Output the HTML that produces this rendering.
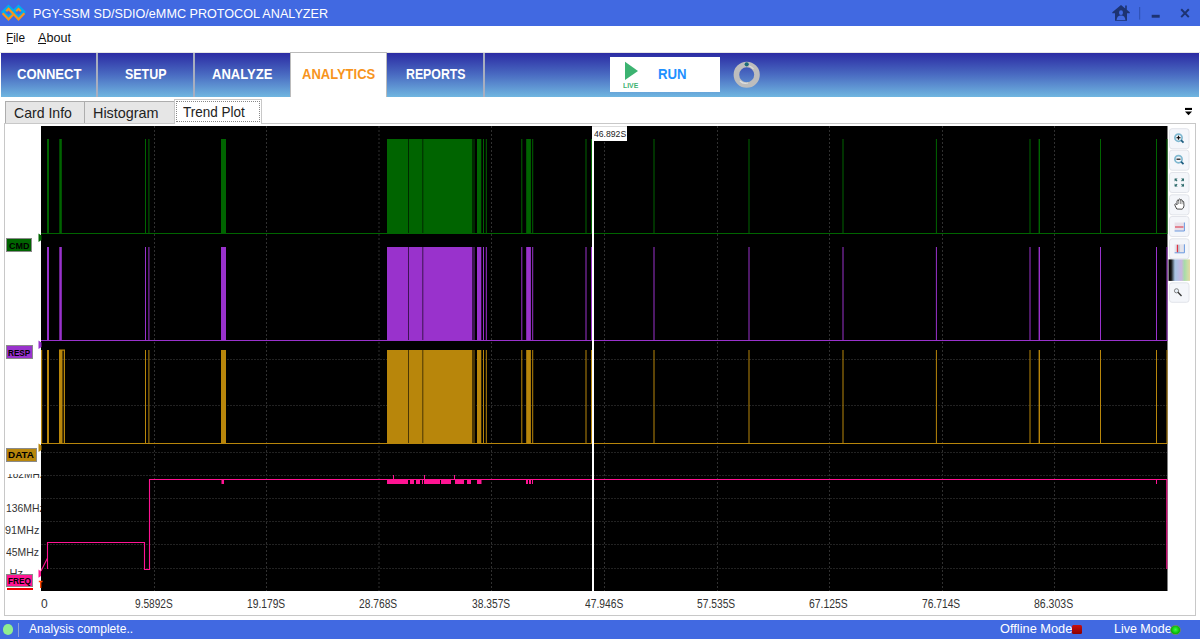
<!DOCTYPE html>
<html><head><meta charset="utf-8"><style>
*{margin:0;padding:0;box-sizing:border-box}
body{width:1200px;height:639px;overflow:hidden;background:#fff;font-family:"Liberation Sans", sans-serif;position:relative}
.a{position:absolute}
.t{position:absolute;white-space:pre;transform-origin:0 0;font-family:"Liberation Sans", sans-serif}
</style></head><body>
<div class="a" style="left:0;top:0;width:1200px;height:26px;background:#4169E1"></div>
<div class="a" style="left:0;top:52px;width:1200px;height:1px;background:#e6e6e6"></div>
<div class="a" style="left:1px;top:53px;width:1198px;height:44px;background:linear-gradient(#2B2BA3,#4a6cc2 50%,#70b6e0)"></div>
<div class="a" style="left:96px;top:53px;width:1.5px;height:44px;background:#a8aec0"></div>
<div class="a" style="left:193px;top:53px;width:1.5px;height:44px;background:#a8aec0"></div>
<div class="a" style="left:483px;top:53px;width:1.5px;height:44px;background:#a8aec0"></div>
<div class="a" style="left:290px;top:52px;width:97px;height:45px;background:#fff;border:1px solid #bbb;border-bottom:none"></div>
<div class="a" style="left:610px;top:57px;width:110px;height:35px;background:#fff"></div>
<div class="a" style="left:5px;top:101px;width:80px;height:23px;background:#e6e6e6;border:1px solid #adadad;border-bottom:none"></div>
<div class="a" style="left:84px;top:101px;width:91px;height:23px;background:#e6e6e6;border:1px solid #adadad;border-bottom:none"></div>
<div class="a" style="left:4px;top:123px;width:1192px;height:493px;border:1px solid #c8c8c8;background:#fff"></div>
<div class="a" style="left:174px;top:99px;width:88px;height:25px;background:#fff;border:1px solid #c8c8c8;border-bottom:none"></div>
<div class="a" style="left:176px;top:101px;width:84px;height:21px;border:1px dotted #888"></div>
<div class="a" style="left:0;top:0;width:41px;height:639px;overflow:hidden"><div class="t " style="left:5.76px;top:503.00px;font-size:11.0px;line-height:11.0px;font-weight:normal;color:#333;transform:scaleX(0.9436);">136MHz</div><div class="t " style="left:5.32px;top:524.50px;font-size:11.0px;line-height:11.0px;font-weight:normal;color:#333;transform:scaleX(0.9848);">91MHz</div><div class="t " style="left:6.30px;top:546.70px;font-size:11.5px;line-height:11.5px;font-weight:normal;color:#333;transform:scaleX(0.9028);">45MHz</div><div class="t " style="left:5.90px;top:568.00px;font-size:11.0px;line-height:11.0px;font-weight:normal;color:#333;transform:scaleX(1.0000);">-Hz</div><div class="a" style="left:0;top:473.5px;width:41px;height:6px;overflow:hidden"><div class="a" style="left:0;top:-473.5px;width:41px;height:639px"><div class="t " style="left:6.87px;top:469.00px;font-size:11.0px;line-height:11.0px;font-weight:normal;color:#333;transform:scaleX(0.9282);">182MHz</div></div></div></div>
<svg width="1200" height="639" style="position:absolute;left:0;top:0">
<rect x="41" y="126" width="1126.5" height="465" fill="#000"/>
<line x1="154.5" y1="126" x2="154.5" y2="591" stroke="#303030" stroke-width="1" stroke-dasharray="2,2"/>
<line x1="266.5" y1="126" x2="266.5" y2="591" stroke="#303030" stroke-width="1" stroke-dasharray="2,2"/>
<line x1="379.0" y1="126" x2="379.0" y2="591" stroke="#303030" stroke-width="1" stroke-dasharray="2,2"/>
<line x1="491.5" y1="126" x2="491.5" y2="591" stroke="#303030" stroke-width="1" stroke-dasharray="2,2"/>
<line x1="604.5" y1="126" x2="604.5" y2="591" stroke="#303030" stroke-width="1" stroke-dasharray="2,2"/>
<line x1="717.5" y1="126" x2="717.5" y2="591" stroke="#303030" stroke-width="1" stroke-dasharray="2,2"/>
<line x1="829.5" y1="126" x2="829.5" y2="591" stroke="#303030" stroke-width="1" stroke-dasharray="2,2"/>
<line x1="942.5" y1="126" x2="942.5" y2="591" stroke="#303030" stroke-width="1" stroke-dasharray="2,2"/>
<line x1="1054.5" y1="126" x2="1054.5" y2="591" stroke="#303030" stroke-width="1" stroke-dasharray="2,2"/>
<line x1="41" y1="359.5" x2="1167" y2="359.5" stroke="#222" stroke-width="1" stroke-dasharray="2,1"/>
<line x1="41" y1="405.5" x2="1167" y2="405.5" stroke="#222" stroke-width="1" stroke-dasharray="2,1"/>
<line x1="41" y1="452.5" x2="1167" y2="452.5" stroke="#222" stroke-width="1" stroke-dasharray="2,1"/>
<line x1="41" y1="475.5" x2="1167" y2="475.5" stroke="#222" stroke-width="1" stroke-dasharray="2,1"/>
<line x1="41" y1="498.5" x2="1167" y2="498.5" stroke="#222" stroke-width="1" stroke-dasharray="2,1"/>
<line x1="41" y1="521.5" x2="1167" y2="521.5" stroke="#222" stroke-width="1" stroke-dasharray="2,1"/>
<line x1="41" y1="544.5" x2="1167" y2="544.5" stroke="#222" stroke-width="1" stroke-dasharray="2,1"/>
<line x1="41" y1="568.5" x2="1167" y2="568.5" stroke="#222" stroke-width="1" stroke-dasharray="2,1"/>
<rect x="47" y="139" width="2.00" height="95" fill="#006400"/>
<rect x="59.3" y="139" width="2.50" height="95" fill="#006400"/>
<rect x="145" y="139" width="1.00" height="95" fill="#006400"/>
<rect x="148.4" y="139" width="1.00" height="95" fill="#006400"/>
<rect x="221" y="139" width="5.00" height="95" fill="#006400"/>
<rect x="387" y="139" width="85.50" height="95" fill="#006400"/>
<rect x="477" y="139" width="4.30" height="95" fill="#006400"/>
<rect x="483" y="139" width="1.00" height="95" fill="#006400"/>
<rect x="485.8" y="139" width="1.00" height="95" fill="#006400"/>
<rect x="521.3" y="139" width="1.00" height="95" fill="#006400"/>
<rect x="526.2" y="139" width="4.70" height="95" fill="#006400"/>
<rect x="532.2" y="139" width="1.00" height="95" fill="#006400"/>
<rect x="585.5" y="139" width="1.00" height="95" fill="#006400"/>
<rect x="591" y="139" width="1.00" height="95" fill="#006400"/>
<rect x="653.5" y="139" width="1.00" height="95" fill="#006400"/>
<rect x="748.5" y="139" width="1.00" height="95" fill="#006400"/>
<rect x="842.5" y="139" width="1.00" height="95" fill="#006400"/>
<rect x="935.9" y="139" width="1.00" height="95" fill="#006400"/>
<rect x="1029.5" y="139" width="1.00" height="95" fill="#006400"/>
<rect x="1038.6" y="139" width="1.40" height="95" fill="#006400"/>
<rect x="1100" y="139" width="1.00" height="95" fill="#006400"/>
<rect x="1156" y="139" width="1.00" height="95" fill="#006400"/>
<rect x="408" y="139" width="1.00" height="94" fill="#002800"/>
<rect x="422.3" y="139" width="1.00" height="94" fill="#002800"/>
<rect x="472" y="139" width="3" height="94" fill="#002800"/>
<rect x="41" y="233" width="1126.5" height="1" fill="#006400"/>
<rect x="47" y="247" width="2.00" height="94" fill="#9932CC"/>
<rect x="59.3" y="247" width="2.50" height="94" fill="#9932CC"/>
<rect x="145" y="247" width="1.00" height="94" fill="#9932CC"/>
<rect x="148.4" y="247" width="1.00" height="94" fill="#9932CC"/>
<rect x="221" y="247" width="5.00" height="94" fill="#9932CC"/>
<rect x="387" y="247" width="85.50" height="94" fill="#9932CC"/>
<rect x="477" y="247" width="4.30" height="94" fill="#9932CC"/>
<rect x="483" y="247" width="1.00" height="94" fill="#9932CC"/>
<rect x="485.8" y="247" width="1.00" height="94" fill="#9932CC"/>
<rect x="521.3" y="247" width="1.00" height="94" fill="#9932CC"/>
<rect x="526.2" y="247" width="4.70" height="94" fill="#9932CC"/>
<rect x="532.2" y="247" width="1.00" height="94" fill="#9932CC"/>
<rect x="585.5" y="247" width="1.00" height="94" fill="#9932CC"/>
<rect x="591" y="247" width="1.00" height="94" fill="#9932CC"/>
<rect x="653.5" y="247" width="1.00" height="94" fill="#9932CC"/>
<rect x="748.5" y="247" width="1.00" height="94" fill="#9932CC"/>
<rect x="842.5" y="247" width="1.00" height="94" fill="#9932CC"/>
<rect x="935.9" y="247" width="1.00" height="94" fill="#9932CC"/>
<rect x="1029.5" y="247" width="1.00" height="94" fill="#9932CC"/>
<rect x="1038.6" y="247" width="1.40" height="94" fill="#9932CC"/>
<rect x="1100" y="247" width="1.00" height="94" fill="#9932CC"/>
<rect x="1156" y="247" width="1.00" height="94" fill="#9932CC"/>
<rect x="408" y="247" width="1.00" height="93" fill="#3d1452"/>
<rect x="422.3" y="247" width="1.00" height="93" fill="#3d1452"/>
<rect x="472" y="247" width="3" height="93" fill="#3d1452"/>
<rect x="41" y="340" width="1126.5" height="1" fill="#9932CC"/>
<rect x="47" y="350" width="2.00" height="94" fill="#B8860B"/>
<rect x="59" y="350" width="3.50" height="94" fill="#B8860B"/>
<rect x="145" y="350" width="1.00" height="94" fill="#B8860B"/>
<rect x="148.4" y="350" width="1.00" height="94" fill="#B8860B"/>
<rect x="221" y="350" width="5.00" height="94" fill="#B8860B"/>
<rect x="387" y="350" width="85.50" height="94" fill="#B8860B"/>
<rect x="477" y="350" width="4.30" height="94" fill="#B8860B"/>
<rect x="483" y="350" width="1.00" height="94" fill="#B8860B"/>
<rect x="485.8" y="350" width="1.00" height="94" fill="#B8860B"/>
<rect x="521.3" y="350" width="1.00" height="94" fill="#B8860B"/>
<rect x="526.2" y="350" width="4.70" height="94" fill="#B8860B"/>
<rect x="532.2" y="350" width="1.00" height="94" fill="#B8860B"/>
<rect x="585.5" y="350" width="1.00" height="94" fill="#B8860B"/>
<rect x="591" y="350" width="1.00" height="94" fill="#B8860B"/>
<rect x="653.5" y="350" width="1.00" height="94" fill="#B8860B"/>
<rect x="748.5" y="350" width="1.00" height="94" fill="#B8860B"/>
<rect x="842.5" y="350" width="1.00" height="94" fill="#B8860B"/>
<rect x="935.9" y="350" width="1.00" height="94" fill="#B8860B"/>
<rect x="1029.5" y="350" width="1.00" height="94" fill="#B8860B"/>
<rect x="1038.6" y="350" width="1.40" height="94" fill="#B8860B"/>
<rect x="1100" y="350" width="1.00" height="94" fill="#B8860B"/>
<rect x="1156" y="350" width="1.00" height="94" fill="#B8860B"/>
<rect x="63.75" y="350" width="1.25" height="94" fill="#B8860B"/>
<rect x="408" y="350" width="1.00" height="93" fill="#4a3604"/>
<rect x="422.3" y="350" width="1.00" height="93" fill="#4a3604"/>
<rect x="472" y="350" width="3" height="93" fill="#4a3604"/>
<rect x="41" y="443" width="1126.5" height="1" fill="#B8860B"/><rect x="59" y="349.5" width="6" height="1.2" fill="#B8860B"/>
<polyline points="41,571 47.5,558 47.5,569 47.5,542.5 144.5,542.5 144.5,569.5 149.5,569.5 149.5,479.5 1166.8,479.5 1166.8,569" fill="none" stroke="#FF1493" stroke-width="1.1"/><rect x="221.5" y="479" width="2.5" height="5" fill="#FF1493"/><rect x="387" y="479" width="21" height="5" fill="#FF1493"/><rect x="410" y="479" width="4" height="5" fill="#FF1493"/><rect x="416" y="479" width="4" height="5" fill="#FF1493"/><rect x="422" y="479" width="1" height="5" fill="#FF1493"/><rect x="424" y="479" width="16" height="5" fill="#FF1493"/><rect x="441" y="479" width="10" height="5" fill="#FF1493"/><rect x="455" y="479" width="9" height="5" fill="#FF1493"/><rect x="467" y="479" width="4" height="5" fill="#FF1493"/><rect x="477" y="479" width="4.5" height="5" fill="#FF1493"/><rect x="526" y="479" width="2" height="5" fill="#FF1493"/><rect x="529" y="479" width="2" height="5" fill="#FF1493"/><rect x="532" y="479" width="1" height="5" fill="#FF1493"/><rect x="393" y="475" width="1" height="5" fill="#FF1493"/><rect x="424" y="475" width="1" height="5" fill="#FF1493"/><rect x="454" y="475" width="1" height="5" fill="#FF1493"/><rect x="1156" y="479" width="1" height="5" fill="#FF1493"/>
<rect x="1166.5" y="139" width="1" height="94" fill="#006400"/><rect x="1166.5" y="247" width="1" height="93" fill="#9932CC"/><rect x="1166.5" y="350" width="1" height="93" fill="#B8860B"/><rect x="41" y="350" width="1.2" height="93" fill="#B8860B"/>
<rect x="592" y="126" width="2" height="465" fill="#fff"/>
<polygon points="38.5,233.5 41.5,235.5 41.5,240 38.5,242" fill="#006400"/><polygon points="38.5,340.5 41.5,342.5 41.5,347 38.5,349" fill="#9932CC"/><polygon points="38.5,443.5 41.5,445.5 41.5,450 38.5,452" fill="#B8860B"/><polygon points="38.5,569.5 41,571.5 41,576 38.5,577.7" fill="#FF1493"/><path d="M38.8,581.5 H42.6 M40.7,581.5 V588" stroke="#FF4500" stroke-width="1.4"/>
</svg>
<div class="a" style="left:6px;top:237.5px;width:26px;height:14.5px;background:#006400;border:1.4px solid #8a8a8a"></div><div class="a" style="left:6px;top:345px;width:27px;height:14px;background:#9932CC;border:1.4px solid #8a8a8a"></div><div class="a" style="left:6px;top:447.5px;width:30.700000000000003px;height:14.5px;background:#B8860B;border:1.4px solid #8a8a8a"></div><div class="a" style="left:6px;top:573.8px;width:26.5px;height:13.700000000000045px;background:#FF1493;border:1.4px solid #8a8a8a"></div><div class="a" style="left:7px;top:588px;width:26px;height:1.5px;background:#e00"></div>
<svg class="a" style="left:0;top:0" width="30" height="26"><polygon points="8.5,6.6 13.9,12.0 8.5,17.4 3.0999999999999996,12.0" fill="none" stroke="#00AEEF" stroke-width="3"/><polygon points="18.5,6.6 23.9,12.0 18.5,17.4 13.1,12.0" fill="none" stroke="#00AEEF" stroke-width="3"/><polyline points="2.6,13.2 8.5,19.3 13.5,14.3" fill="none" stroke="#F7941D" stroke-width="2.3"/><polyline points="6.2,11.2 8.5,8.9 13.5,14.0 18.5,19.3 24.4,13.2" fill="none" stroke="#F7941D" stroke-width="2.3"/><polyline points="16.2,11.2 18.5,8.9 20.8,11.2" fill="none" stroke="#F7941D" stroke-width="2"/></svg><svg class="a" style="left:1100px;top:0" width="100" height="26"><polygon points="12.3,12.2 21,5 25.2,8.4 25.2,5.6 26.8,5.6 26.8,9.7 29.8,12.2 29.8,13.2 27,13.2 27,20.8 15,20.8 15,13.2 12.3,13.2" fill="#1d3372"/><ellipse cx="21" cy="12.7" rx="2" ry="2.4" fill="#4169E1"/><path d="M16.6,20 Q17,15.6 21,15.6 Q25,15.6 25.4,20 Z" fill="#4169E1"/><rect x="39.2" y="7" width="1" height="12.6" fill="#2d4fb0"/><rect x="51.7" y="14.8" width="8" height="2.9" fill="#1d3372"/><path d="M81.2,9.2 L88.8,17.1 M88.8,9.2 L81.2,17.1" stroke="#1d3372" stroke-width="2"/></svg><svg class="a" style="left:600px;top:50px" width="180" height="50"><polygon points="25,11.7 38,21 25,30" fill="#3CB371"/><circle cx="146.7" cy="24.75" r="10.3" fill="none" stroke="#bdbdbd" stroke-width="5.6"/><path d="M 140 31 A 8 8 0 0 0 148 33" fill="none" stroke="#e0e0e0" stroke-width="1.2"/><path d="M 149 16 A 8 8 0 0 1 153.5 19" fill="none" stroke="#dedede" stroke-width="1.2"/><circle cx="146.7" cy="14.3" r="2.1" fill="#1b6b78"/></svg><svg class="a" style="left:1180px;top:100px" width="20" height="20"><rect x="5" y="7.9" width="7" height="2.1" fill="#000"/><polygon points="5,11.4 12,11.4 8.5,15.3" fill="#000"/></svg><svg class="a" style="left:1160px;top:120px" width="40" height="190"><rect x="9.5" y="8.7" width="19.5" height="20" rx="2.5" fill="#f4f6fa" stroke="#e2e4ea" stroke-width="1"/><rect x="9.5" y="30.2" width="19.5" height="20" rx="2.5" fill="#f4f6fa" stroke="#e2e4ea" stroke-width="1"/><rect x="9.5" y="52.5" width="19.5" height="20" rx="2.5" fill="#f4f6fa" stroke="#e2e4ea" stroke-width="1"/><rect x="9.5" y="74.8" width="19.5" height="20" rx="2.5" fill="#f4f6fa" stroke="#e2e4ea" stroke-width="1"/><rect x="9.5" y="96.5" width="19.5" height="20" rx="2.5" fill="#f4f6fa" stroke="#e2e4ea" stroke-width="1"/><rect x="9.5" y="118.8" width="19.5" height="20" rx="2.5" fill="#f4f6fa" stroke="#e2e4ea" stroke-width="1"/><circle cx="18.5" cy="17.7" r="3.6" fill="none" stroke="#7fb8d0" stroke-width="1.7"/><line x1="21" y1="20.2" x2="23.5" y2="22.7" stroke="#1f5e80" stroke-width="1.8"/><line x1="16.5" y1="17.7" x2="20.5" y2="17.7" stroke="#111" stroke-width="1.2"/><line x1="18.5" y1="15.7" x2="18.5" y2="19.7" stroke="#111" stroke-width="1.2"/><circle cx="18.5" cy="39.2" r="3.6" fill="none" stroke="#7fb8d0" stroke-width="1.7"/><line x1="21" y1="41.7" x2="23.5" y2="44.2" stroke="#1f5e80" stroke-width="1.8"/><line x1="16.5" y1="39.2" x2="20.5" y2="39.2" stroke="#111" stroke-width="1.2"/><polygon points="14.6,58.6 17.6,58.6 14.6,61.6" fill="#2e6b6b"/><line x1="15.1" y1="59.1" x2="17.1" y2="61.1" stroke="#2e6b6b" stroke-width="1.2"/><polygon points="24.0,58.6 21.0,58.6 24.0,61.6" fill="#2e6b6b"/><line x1="23.5" y1="59.1" x2="21.5" y2="61.1" stroke="#2e6b6b" stroke-width="1.2"/><polygon points="14.6,66.6 17.6,66.6 14.6,63.6" fill="#2e6b6b"/><line x1="15.1" y1="66.1" x2="17.1" y2="64.1" stroke="#2e6b6b" stroke-width="1.2"/><polygon points="24.0,66.6 21.0,66.6 24.0,63.6" fill="#2e6b6b"/><line x1="23.5" y1="66.1" x2="21.5" y2="64.1" stroke="#2e6b6b" stroke-width="1.2"/><path d="M16.8,89 L15.2,86 Q14.3,84.3 15.4,83.8 Q16.2,83.6 17,84.8 L17,80.8 Q17.8,79.4 18.7,80.6 L18.7,79.6 Q19.5,78.4 20.4,79.6 L20.4,80 Q21.2,78.9 22,80.2 L22,81.2 Q23,80.4 23.7,81.8 L24,85.8 Q23.6,88.6 22,89.2 Z" fill="#fff" stroke="#222" stroke-width="0.8"/><path d="M18.7,80.6 V84 M20.4,80 V84 M22,81.2 V84.2" stroke="#444" stroke-width="0.6"/><rect x="14.6" y="102.5" width="9.8" height="8.5" fill="#e8dfe8"/><path d="M24.4,102.5 V111.0 H14.6" fill="none" stroke="#6a9ae0" stroke-width="1"/><line x1="15" y1="107.0" x2="23.5" y2="107.0" stroke="#e04a5a" stroke-width="1.2"/><rect x="14.6" y="124.3" width="9.8" height="8.5" fill="#e4e4ec"/><path d="M24.4,124.3 V132.8 H14.6" fill="none" stroke="#6a9ae0" stroke-width="1"/><line x1="17.4" y1="124.8" x2="17.4" y2="132.3" stroke="#e03040" stroke-width="1.2"/><line x1="18.9" y1="124.8" x2="18.9" y2="132.3" stroke="#9a9aa8" stroke-width="0.8"/><defs><linearGradient id="cb" x1="0" x2="1"><stop offset="0" stop-color="#000"/><stop offset="0.12" stop-color="#111"/><stop offset="0.3" stop-color="#a8c4e4"/><stop offset="0.45" stop-color="#b4bee4"/><stop offset="0.6" stop-color="#c8b4e0"/><stop offset="0.75" stop-color="#a8dca8"/><stop offset="0.88" stop-color="#c8dca8"/><stop offset="1" stop-color="#e4d8a4"/></linearGradient></defs><rect x="8.5" y="139.4" width="21.5" height="21.5" fill="url(#cb)"/><rect x="9.5" y="162.8" width="19.5" height="19.5" rx="2.5" fill="#f4f6fa" stroke="#e2e4ea" stroke-width="1"/><circle cx="16.5" cy="170.8" r="2.1" fill="#e8f0f8" stroke="#777" stroke-width="0.9"/><line x1="18" y1="172.3" x2="21.5" y2="176.0" stroke="#333" stroke-width="1.3"/></svg>
<div class="a" style="left:592px;top:126px;width:35px;height:15px;background:#fff;border-top:1px solid #ddd"></div>
<div class="a" style="left:0;top:620px;width:1200px;height:19px;background:#4169E1"></div>
<div class="t " style="left:33.07px;top:7.00px;font-size:13.5px;line-height:13.5px;font-weight:normal;color:#fff;transform:scaleX(0.9341);">PGY-SSM SD/SDIO/eMMC PROTOCOL ANALYZER</div><div class="t " style="left:5.79px;top:31.00px;font-size:13.0px;line-height:13.0px;font-weight:normal;color:#111;transform:scaleX(0.9105);">File</div><div class="t " style="left:38.00px;top:31.00px;font-size:13.0px;line-height:13.0px;font-weight:normal;color:#111;transform:scaleX(0.9706);">About</div><div class="t " style="left:16.57px;top:67.00px;font-size:14.0px;line-height:14.0px;font-weight:bold;color:#fff;transform:scaleX(0.9309);">CONNECT</div><div class="t " style="left:124.91px;top:67.00px;font-size:14.0px;line-height:14.0px;font-weight:bold;color:#fff;transform:scaleX(0.8889);">SETUP</div><div class="t " style="left:212.37px;top:67.00px;font-size:14.0px;line-height:14.0px;font-weight:bold;color:#fff;transform:scaleX(0.9317);">ANALYZE</div><div class="t " style="left:302.27px;top:67.00px;font-size:14.0px;line-height:14.0px;font-weight:bold;color:#F7941D;transform:scaleX(0.9286);">ANALYTICS</div><div class="t " style="left:405.82px;top:67.00px;font-size:14.0px;line-height:14.0px;font-weight:bold;color:#fff;transform:scaleX(0.8803);">REPORTS</div><div class="t " style="left:657.79px;top:67.00px;font-size:14.5px;line-height:14.5px;font-weight:bold;color:#1E90FF;transform:scaleX(0.9100);">RUN</div><div class="t " style="left:623.30px;top:82.00px;font-size:7.0px;line-height:7.0px;font-weight:bold;color:#3CB371;transform:scaleX(0.9800);">LIVE</div><div class="t " style="left:13.63px;top:105.50px;font-size:14.5px;line-height:14.5px;font-weight:normal;color:#222;transform:scaleX(0.9707);">Card Info</div><div class="t " style="left:93.01px;top:105.50px;font-size:14.5px;line-height:14.5px;font-weight:normal;color:#222;transform:scaleX(0.9922);">Histogram</div><div class="t " style="left:183.40px;top:104.80px;font-size:14.5px;line-height:14.5px;font-weight:normal;color:#222;transform:scaleX(0.9303);">Trend Plot</div><div class="t " style="left:593.75px;top:129.90px;font-size:8.5px;line-height:8.5px;font-weight:normal;color:#222;transform:scaleX(1.0145);">46.892S</div><div class="t " style="left:41.00px;top:597.70px;font-size:12.0px;line-height:12.0px;font-weight:normal;color:#333;transform:scaleX(1.0000);">0</div><div class="t " style="left:134.91px;top:597.70px;font-size:12.0px;line-height:12.0px;font-weight:normal;color:#333;transform:scaleX(0.8430);">9.5892S</div><div class="t " style="left:247.45px;top:597.70px;font-size:12.0px;line-height:12.0px;font-weight:normal;color:#333;transform:scaleX(0.8535);">19.179S</div><div class="t " style="left:359.15px;top:597.70px;font-size:12.0px;line-height:12.0px;font-weight:normal;color:#333;transform:scaleX(0.8535);">28.768S</div><div class="t " style="left:472.45px;top:597.70px;font-size:12.0px;line-height:12.0px;font-weight:normal;color:#333;transform:scaleX(0.8535);">38.357S</div><div class="t " style="left:585.00px;top:597.70px;font-size:12.0px;line-height:12.0px;font-weight:normal;color:#333;transform:scaleX(0.8568);">47.946S</div><div class="t " style="left:697.45px;top:597.70px;font-size:12.0px;line-height:12.0px;font-weight:normal;color:#333;transform:scaleX(0.8535);">57.535S</div><div class="t " style="left:809.13px;top:597.70px;font-size:12.0px;line-height:12.0px;font-weight:normal;color:#333;transform:scaleX(0.8674);">67.125S</div><div class="t " style="left:922.45px;top:597.70px;font-size:12.0px;line-height:12.0px;font-weight:normal;color:#333;transform:scaleX(0.8535);">76.714S</div><div class="t " style="left:1034.12px;top:597.70px;font-size:12.0px;line-height:12.0px;font-weight:normal;color:#333;transform:scaleX(0.8767);">86.303S</div><div class="t " style="left:9.00px;top:241.60px;font-size:9.0px;line-height:9.0px;font-weight:bold;color:#000;transform:scaleX(1.0000);">CMD</div><div class="t " style="left:8.04px;top:348.80px;font-size:8.5px;line-height:8.5px;font-weight:bold;color:#000;transform:scaleX(0.9591);">RESP</div><div class="t " style="left:8.44px;top:450.80px;font-size:8.5px;line-height:8.5px;font-weight:bold;color:#000;transform:scaleX(1.1619);">DATA</div><div class="t " style="left:8.43px;top:576.70px;font-size:8.5px;line-height:8.5px;font-weight:bold;color:#000;transform:scaleX(0.9682);">FREQ</div><div class="t " style="left:29.30px;top:623.40px;font-size:12.0px;line-height:12.0px;font-weight:normal;color:#fff;transform:scaleX(1.0069);">Analysis complete..</div><div class="t " style="left:1000.42px;top:622.40px;font-size:13.0px;line-height:13.0px;font-weight:normal;color:#fff;transform:scaleX(0.9847);">Offline Mode</div><div class="t " style="left:1113.64px;top:622.40px;font-size:13.0px;line-height:13.0px;font-weight:normal;color:#fff;transform:scaleX(0.9603);">Live Mode</div>
<div class="a" style="left:7px;top:43px;width:6px;height:1px;background:#111"></div><div class="a" style="left:38px;top:43px;width:8px;height:1px;background:#111"></div>
<div class="a" style="left:2.7px;top:624.3px;width:10.6px;height:10.7px;border-radius:50%;background:#90EE90"></div><div class="a" style="left:18.3px;top:623px;width:1px;height:14px;background:#8ea0d8"></div>
<div class="a" style="left:1072.3px;top:625.2px;width:9.9px;height:9.1px;border-radius:1.5px;background:linear-gradient(#c81010,#8c0000)"></div>
<div class="a" style="left:1170.3px;top:624.6px;width:10.5px;height:10.5px;border-radius:50%;background:radial-gradient(circle at 50% 45%,#40ff40,#00b000 70%);border:1px solid #6a8a6a"></div>

</body></html>
